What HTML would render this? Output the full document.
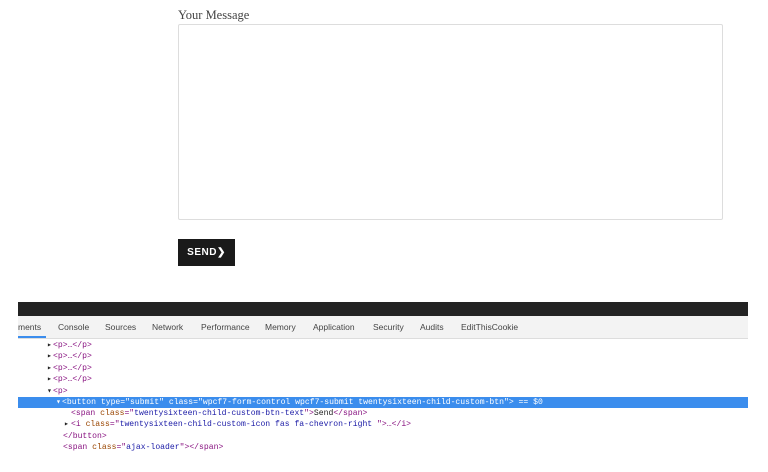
<!DOCTYPE html>
<html><head><style>
body{margin:0;width:768px;height:472px;background:#fff;position:relative;overflow:hidden;font-family:"Liberation Sans",sans-serif}
.a{position:absolute}
.lbl{left:178px;top:8px;font-family:"Liberation Serif",serif;font-size:12.5px;color:#444}
.ta{left:178px;top:24px;width:543px;height:194px;border:1px solid #ddd;border-radius:2px}
.btn{left:178px;top:239px;width:57px;height:27px;background:#1a1a1a;color:#fff;font-weight:bold;font-size:10px;line-height:27px;text-align:center;letter-spacing:.5px}
.bar{left:18px;top:302px;width:730px;height:14px;background:#232323}
.tabs{left:18px;top:316px;width:730px;height:22px;background:#f3f3f3;border-bottom:1px solid #ddd;font-size:8.5px;color:#444}
.tabs span{position:absolute;top:6px}
.row{left:18px;width:730px;height:11px;font-family:"Liberation Mono",monospace;font-size:8.1px;line-height:11px;color:#881280;white-space:pre}
.row b{font-weight:normal;position:absolute;top:0}
.t{color:#994500}.v{color:#1a1aa6}.x{color:#222}
.hl{background:#3b8ded;color:#fff}
</style></head><body>
<div class="a lbl">Your Message</div>
<div class="a ta"></div>
<div class="a btn">SEND&#x276F;</div>
<div class="a bar"></div>
<div class="a tabs">
<span style="left:0">ments</span><span style="left:40px">Console</span><span style="left:87px">Sources</span><span style="left:134px">Network</span><span style="left:183px">Performance</span><span style="left:247px">Memory</span><span style="left:295px">Application</span><span style="left:355px">Security</span><span style="left:402px">Audits</span><span style="left:443px">EditThisCookie</span>
<div class="a" style="left:0;top:20px;width:28px;height:2px;background:#3b8ded"></div>
</div>
<div class="a row" style="top:340px"><b class="x" style="left:29px">▸</b><b style="left:35px">&lt;p&gt;…&lt;/p&gt;</b></div>
<div class="a row" style="top:351px"><b class="x" style="left:29px">▸</b><b style="left:35px">&lt;p&gt;…&lt;/p&gt;</b></div>
<div class="a row" style="top:363px"><b class="x" style="left:29px">▸</b><b style="left:35px">&lt;p&gt;…&lt;/p&gt;</b></div>
<div class="a row" style="top:374px"><b class="x" style="left:29px">▸</b><b style="left:35px">&lt;p&gt;…&lt;/p&gt;</b></div>
<div class="a row" style="top:386px"><b class="x" style="left:29px">▾</b><b style="left:35px">&lt;p&gt;</b></div>
<div class="a row hl" style="top:397px"><b style="left:38px">▾</b><b style="left:44px">&lt;button type="submit" class="wpcf7-form-control wpcf7-submit twentysixteen-child-custom-btn"&gt; == $0</b></div>
<div class="a row" style="top:408px"><b style="left:53px">&lt;span <span class="t">class</span>="<span class="v">twentysixteen-child-custom-btn-text</span>"&gt;<span class="x">Send</span>&lt;/span&gt;</b></div>
<div class="a row" style="top:419px"><b class="x" style="left:46px">▸</b><b style="left:53px">&lt;i <span class="t">class</span>="<span class="v">twentysixteen-child-custom-icon fas fa-chevron-right </span>"&gt;…&lt;/i&gt;</b></div>
<div class="a row" style="top:431px"><b style="left:45px">&lt;/button&gt;</b></div>
<div class="a row" style="top:442px"><b style="left:45px">&lt;span <span class="t">class</span>="<span class="v">ajax-loader</span>"&gt;&lt;/span&gt;</b></div>
</body></html>
